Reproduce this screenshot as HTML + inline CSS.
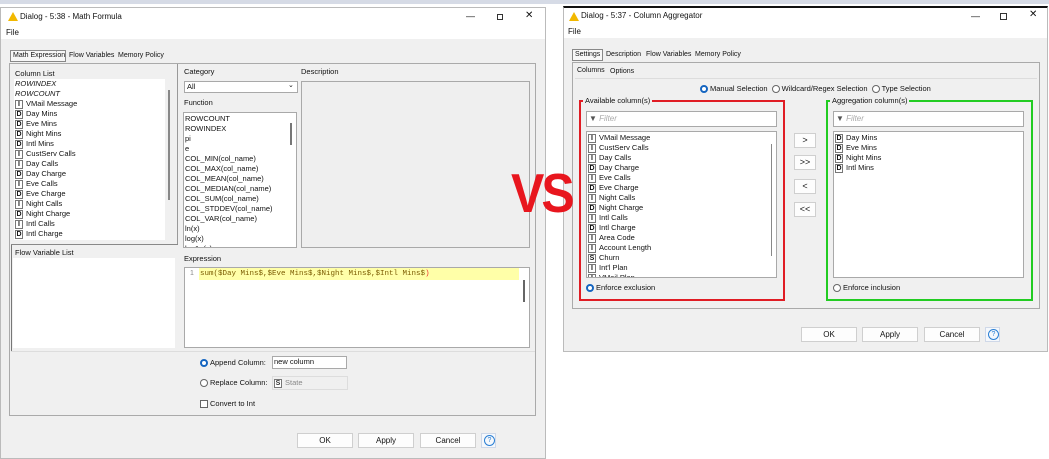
<!DOCTYPE html>
<html><head><meta charset="utf-8"><style>
*{box-sizing:border-box;margin:0;padding:0}
body{width:1049px;height:459px;background:#fff;position:relative;overflow:hidden;font-family:"Liberation Sans",sans-serif;font-size:7.5px;color:#111}
.a{position:absolute}
.w{background:#fff}
.bd{border:1px solid #a9a9a9}
.g{background:#f0f0f0}
.t{position:absolute;white-space:nowrap;line-height:10px}
.ic{display:inline-block;width:8px;height:9px;border:1px solid #777;font-size:7px;line-height:7px;text-align:center;margin-right:3px;font-weight:bold;vertical-align:middle;background:#fff}
.row{height:10px;line-height:10px;white-space:nowrap}
.btn{position:absolute;height:15px;background:#fdfdfd;border:1px solid #cfcfcf;text-align:center;line-height:13px;font-size:8px}
.help{position:absolute;width:15px;height:15px;border:1px solid #cfd8e8;background:#f5f8fc}
.help:after{content:"?";position:absolute;left:2px;top:1px;width:9px;height:9px;border:1px solid #2a7fd4;border-radius:50%;color:#2a7fd4;font-size:7px;line-height:9px;text-align:center}
.rad{display:inline-block;width:8px;height:8px;border:1px solid #666;border-radius:50%;vertical-align:middle;margin-right:2px;background:#fff}
.rad.on{border:2.5px solid #1565c0}
.tri{width:0;height:0;border-left:5px solid transparent;border-right:5px solid transparent;border-bottom:9px solid #f2b800;position:absolute}
.tab{font-size:7px}
</style></head><body>
<div class="a" style="left:0;top:0;width:1049px;height:4px;background:#d6dbe6"></div>

<!-- LEFT DIALOG -->
<div class="a g" style="left:0;top:7px;width:546px;height:452px;border:1px solid #bbb"></div>
<div class="a w" style="left:1px;top:8px;width:544px;height:31px"></div>
<div class="tri" style="left:8px;top:12px"></div>
<div class="t" style="left:20px;top:12px;font-size:8px">Dialog - 5:38 - Math Formula</div>
<div class="t" style="left:466px;top:11px;font-size:9px">—</div>
<div class="a" style="left:497px;top:14px;width:6px;height:6px;border:1px solid #333"></div>
<div class="t" style="left:525px;top:11px;font-size:10px">✕</div>
<div class="t" style="left:6px;top:28px;font-size:8px">File</div>
<div class="t tab" style="left:10px;top:50px;border:1px solid #888;padding:0 2px;background:#f7f7f7;width:56px">Math Expression</div>
<div class="t tab" style="left:69px;top:51px">Flow Variables</div>
<div class="t tab" style="left:118px;top:51px">Memory Policy</div>
<div class="a" style="left:9px;top:63px;width:527px;height:353px;border:1px solid #aaa"></div>
<div class="a" style="left:10px;top:64px;width:168px;height:180px;border-right:1px solid #999"></div>
<div class="t" style="left:15px;top:69px">Column List</div>
<div class="a w" style="left:14px;top:79px;width:151px;height:161px;padding-left:1px">
<div class="row" style="font-style:italic">ROWINDEX</div>
<div class="row" style="font-style:italic">ROWCOUNT</div>
<div class="row"><span class="ic">I</span>VMail Message</div>
<div class="row"><span class="ic">D</span>Day Mins</div>
<div class="row"><span class="ic">D</span>Eve Mins</div>
<div class="row"><span class="ic">D</span>Night Mins</div>
<div class="row"><span class="ic">D</span>Intl Mins</div>
<div class="row"><span class="ic">I</span>CustServ Calls</div>
<div class="row"><span class="ic">I</span>Day Calls</div>
<div class="row"><span class="ic">D</span>Day Charge</div>
<div class="row"><span class="ic">I</span>Eve Calls</div>
<div class="row"><span class="ic">D</span>Eve Charge</div>
<div class="row"><span class="ic">I</span>Night Calls</div>
<div class="row"><span class="ic">D</span>Night Charge</div>
<div class="row"><span class="ic">I</span>Intl Calls</div>
<div class="row"><span class="ic">D</span>Intl Charge</div>
</div>
<div class="a" style="left:168px;top:90px;width:2px;height:110px;background:#888"></div>
<div class="a" style="left:11px;top:244px;width:167px;height:1px;background:#888"></div>
<div class="t" style="left:15px;top:248px">Flow Variable List</div>
<div class="a w" style="left:13px;top:258px;width:162px;height:90px"></div>
<div class="a" style="left:11px;top:245px;width:1px;height:106px;background:#777"></div>
<div class="a" style="left:11px;top:351px;width:524px;height:1px;background:#ddd"></div>

<div class="t" style="left:184px;top:67px">Category</div>
<div class="a w bd" style="left:184px;top:81px;width:114px;height:12px"></div>
<div class="t" style="left:187px;top:82px">All</div>
<div class="t" style="left:288px;top:81px;font-size:7px">⌄</div>
<div class="t" style="left:184px;top:98px">Function</div>
<div class="a w bd" style="left:183px;top:112px;width:114px;height:136px;overflow:hidden;padding:1px 0 0 1px">
<div class="row">ROWCOUNT</div><div class="row">ROWINDEX</div><div class="row">pi</div><div class="row">e</div>
<div class="row">COL_MIN(col_name)</div><div class="row">COL_MAX(col_name)</div><div class="row">COL_MEAN(col_name)</div>
<div class="row">COL_MEDIAN(col_name)</div><div class="row">COL_SUM(col_name)</div><div class="row">COL_STDDEV(col_name)</div>
<div class="row">COL_VAR(col_name)</div><div class="row">ln(x)</div><div class="row">log(x)</div><div class="row">log1p(x)</div>
</div>
<div class="a" style="left:290px;top:123px;width:2px;height:22px;background:#777"></div>
<div class="t" style="left:301px;top:67px">Description</div>
<div class="a bd" style="left:301px;top:81px;width:229px;height:167px;background:#efefef"></div>
<div class="t" style="left:184px;top:254px">Expression</div>
<div class="a w bd" style="left:184px;top:267px;width:346px;height:81px"></div>
<div class="a" style="left:199px;top:268px;width:320px;height:12px;background:#ffffa8"></div>
<div class="t" style="left:190px;top:269px;color:#888;font-size:7px">1</div>
<div class="t" style="left:200px;top:269px;font-family:'Liberation Mono',monospace;font-size:7.5px;color:#7a5a00">sum(<span>$Day Mins$,$Eve Mins$,$Night Mins$,$Intl Mins$</span><span style="color:#e33">)</span></div>
<div class="a" style="left:523px;top:280px;width:2px;height:22px;background:#666"></div>

<div class="t" style="left:200px;top:358px"><span class="rad on"></span>Append Column:</div>
<div class="a w bd" style="left:272px;top:356px;width:75px;height:13px"></div>
<div class="t" style="left:274px;top:357px">new column</div>
<div class="t" style="left:200px;top:378px"><span class="rad"></span>Replace Column:</div>
<div class="a" style="left:272px;top:376px;width:76px;height:14px;border:1px solid #ddd"></div>
<div class="t" style="left:274px;top:378px;color:#888"><span class="ic" style="color:#333">S</span>State</div>
<div class="t" style="left:200px;top:399px"><span style="position:relative;display:inline-block;width:8px;height:8px;border:1px solid #666;background:#fff;vertical-align:middle;margin-right:2px"></span>Convert to Int</div>

<div class="btn" style="left:297px;top:433px;width:56px">OK</div>
<div class="btn" style="left:358px;top:433px;width:56px">Apply</div>
<div class="btn" style="left:420px;top:433px;width:56px">Cancel</div>
<div class="help" style="left:481px;top:433px"></div>

<!-- RIGHT DIALOG -->
<div class="a g" style="left:563px;top:6px;width:485px;height:346px;border:1px solid #bbb;border-top:2px solid #111"></div>
<div class="a w" style="left:564px;top:8px;width:483px;height:30px"></div>
<div class="tri" style="left:569px;top:12px"></div>
<div class="t" style="left:581px;top:11px;font-size:8px">Dialog - 5:37 - Column Aggregator</div>
<div class="t" style="left:971px;top:11px;font-size:9px">—</div>
<div class="a" style="left:1000px;top:13px;width:7px;height:7px;border:1px solid #333"></div>
<div class="t" style="left:1029px;top:10px;font-size:10px">✕</div>
<div class="t" style="left:568px;top:27px;font-size:8px">File</div>
<div class="t tab" style="left:572px;top:49px;border:1px solid #888;padding:0 2px;background:#f7f7f7">Settings</div>
<div class="t tab" style="left:606px;top:50px">Description</div>
<div class="t tab" style="left:646px;top:50px">Flow Variables</div>
<div class="t tab" style="left:695px;top:50px">Memory Policy</div>
<div class="a" style="left:572px;top:62px;width:468px;height:247px;border:1px solid #aaa"></div>
<div class="t tab" style="left:577px;top:66px">Columns</div>
<div class="t tab" style="left:610px;top:67px">Options</div>
<div class="a" style="left:575px;top:78px;width:462px;height:1px;background:#ddd"></div>
<div class="t" style="left:700px;top:84px"><span class="rad on"></span>Manual Selection <span class="rad" style="margin-left:2px"></span>Wildcard/Regex Selection <span class="rad" style="margin-left:2px"></span>Type Selection</div>

<div class="a" style="left:579px;top:100px;width:206px;height:201px;border:2px solid #e01c24"></div>
<div class="t g" style="left:583px;top:96px;padding:0 2px">Available column(s)</div>
<div class="a w bd" style="left:586px;top:111px;width:191px;height:16px"></div>
<div class="t" style="left:589px;top:114px;color:#aaa;font-style:italic;font-size:8px"><span style="color:#555;font-style:normal">▼</span> Filter</div>
<div class="a w bd" style="left:586px;top:131px;width:191px;height:147px;overflow:hidden;padding:1px 0 0 1px">
<div class="row"><span class="ic">I</span>VMail Message</div><div class="row"><span class="ic">I</span>CustServ Calls</div>
<div class="row"><span class="ic">I</span>Day Calls</div><div class="row"><span class="ic">D</span>Day Charge</div>
<div class="row"><span class="ic">I</span>Eve Calls</div><div class="row"><span class="ic">D</span>Eve Charge</div>
<div class="row"><span class="ic">I</span>Night Calls</div><div class="row"><span class="ic">D</span>Night Charge</div>
<div class="row"><span class="ic">I</span>Intl Calls</div><div class="row"><span class="ic">D</span>Intl Charge</div>
<div class="row"><span class="ic">I</span>Area Code</div><div class="row"><span class="ic">I</span>Account Length</div>
<div class="row"><span class="ic">S</span>Churn</div><div class="row"><span class="ic">I</span>Int'l Plan</div>
<div class="row"><span class="ic">I</span>VMail Plan</div>
</div>
<div class="a" style="left:771px;top:144px;width:1px;height:112px;background:#888"></div>
<div class="t" style="left:586px;top:283px"><span class="rad on"></span>Enforce exclusion</div>

<div class="btn" style="left:794px;top:133px;width:22px;font-size:9px">&gt;</div>
<div class="btn" style="left:794px;top:155px;width:22px;font-size:9px">&gt;&gt;</div>
<div class="btn" style="left:794px;top:179px;width:22px;font-size:9px">&lt;</div>
<div class="btn" style="left:794px;top:202px;width:22px;font-size:9px">&lt;&lt;</div>

<div class="a" style="left:826px;top:100px;width:207px;height:201px;border:2px solid #22cc22"></div>
<div class="t g" style="left:830px;top:96px;padding:0 2px">Aggregation column(s)</div>
<div class="a w bd" style="left:833px;top:111px;width:191px;height:16px"></div>
<div class="t" style="left:836px;top:114px;color:#aaa;font-style:italic;font-size:8px"><span style="color:#555;font-style:normal">▼</span> Filter</div>
<div class="a w bd" style="left:833px;top:131px;width:191px;height:147px;padding:1px 0 0 1px">
<div class="row"><span class="ic">D</span>Day Mins</div><div class="row"><span class="ic">D</span>Eve Mins</div>
<div class="row"><span class="ic">D</span>Night Mins</div><div class="row"><span class="ic">D</span>Intl Mins</div>
</div>
<div class="t" style="left:833px;top:283px"><span class="rad"></span>Enforce inclusion</div>

<div class="btn" style="left:801px;top:327px;width:56px">OK</div>
<div class="btn" style="left:862px;top:327px;width:56px">Apply</div>
<div class="btn" style="left:924px;top:327px;width:56px">Cancel</div>
<div class="help" style="left:985px;top:327px"></div>

<!-- VS -->
<div class="t" style="left:511px;top:166px;font-size:50px;line-height:50px;font-weight:bold;color:#e8161e;letter-spacing:-3px;transform:scaleY(1.1);transform-origin:top left;z-index:10">VS</div>
</body></html>
